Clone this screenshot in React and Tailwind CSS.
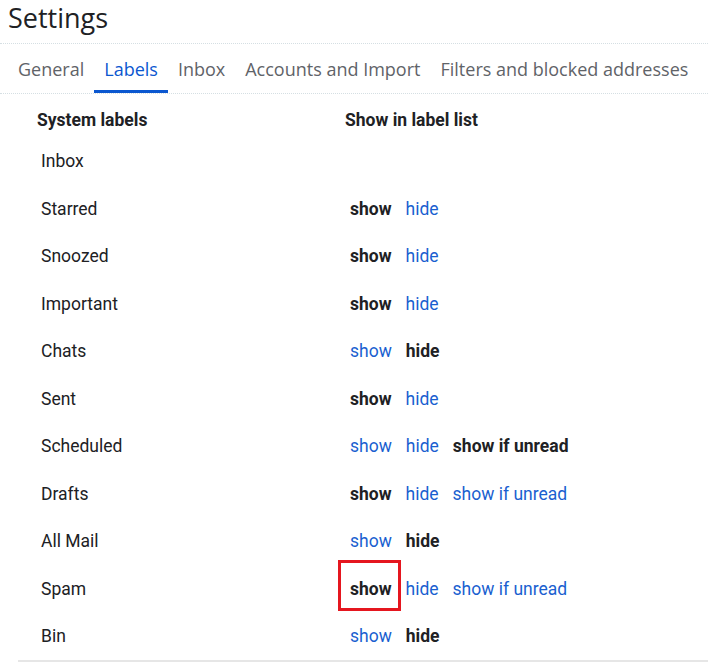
import React from 'react';

const tabs = ['General', 'Labels', 'Inbox', 'Accounts and Import', 'Filters and blocked addresses'];

// which option is the current one (bold) for each label
const rows = [
  { name: 'Inbox', opts: [] },
  { name: 'Starred', opts: ['show', 'hide'], active: 'show' },
  { name: 'Snoozed', opts: ['show', 'hide'], active: 'show' },
  { name: 'Important', opts: ['show', 'hide'], active: 'show' },
  { name: 'Chats', opts: ['show', 'hide'], active: 'hide' },
  { name: 'Sent', opts: ['show', 'hide'], active: 'show' },
  { name: 'Scheduled', opts: ['show', 'hide', 'show if unread'], active: 'show if unread' },
  { name: 'Drafts', opts: ['show', 'hide', 'show if unread'], active: 'show' },
  { name: 'All Mail', opts: ['show', 'hide'], active: 'hide' },
  { name: 'Spam', opts: ['show', 'hide', 'show if unread'], active: 'show', marked: true },
  { name: 'Bin', opts: ['show', 'hide'], active: 'hide' },
];

const Option = ({ label, active, marked }) => (
  <span className="relative">
    {active ? (
      <span className="font-bold text-[#202124]">{label}</span>
    ) : (
      <span className="text-[#1a5fd0] cursor-pointer">{label}</span>
    )}
    {marked && (
      <span className="absolute left-[-12px] top-[-16px] w-[63px] h-[51px] border-[3px] border-[#e5161f]" />
    )}
  </span>
);

export default function App() {
  return (
    <div className="w-[708px] h-[662px] overflow-hidden bg-white font-['Roboto',sans-serif] text-[#202124]">
      <div className="h-[44px] pl-2 pt-[1px] border-b border-dotted border-[#d5dfe3]">
        <h1 className="text-[27px] leading-[34px] font-['Open_Sans','Roboto',sans-serif] text-[#202124]">
          Settings
        </h1>
      </div>

      <div className="h-[50px] flex pl-2 border-b border-dotted border-[#d5dfe3] font-['Open_Sans','Roboto',sans-serif] text-[18px]">
        {tabs.map((t) => (
          <div
            key={t}
            className={
              t === 'Labels'
                ? 'px-[10px] flex items-center text-[#0b57d0] border-b-[3px] border-[#0b57d0] pt-[5px] whitespace-nowrap'
                : 'px-[10px] flex items-center text-[#5f6368] pt-[2px] whitespace-nowrap'
            }
          >
            {t}
          </div>
        ))}
      </div>

      <div className="ml-[18px] text-[17.5px]">
        <div className="h-[43px] flex items-end pb-[4px] font-bold text-[#202124]">
          <div className="w-[327px] pl-[19px]">System labels</div>
          <div>Show in label list</div>
        </div>
        {rows.map((r) => (
          <div key={r.name} className="h-[47.5px] flex items-center pt-[1px]">
            <div className="w-[327px] pl-[23px] text-[#202124]">{r.name}</div>
            <div className="pl-[5px] flex gap-[14px]">
              {r.opts.map((o) => (
                <Option key={o} label={o} active={o === r.active} marked={r.marked && o === 'show'} />
              ))}
            </div>
          </div>
        ))}
        <div className="border-t-2 border-[#e6e6e6]" />
      </div>
    </div>
  );
}
